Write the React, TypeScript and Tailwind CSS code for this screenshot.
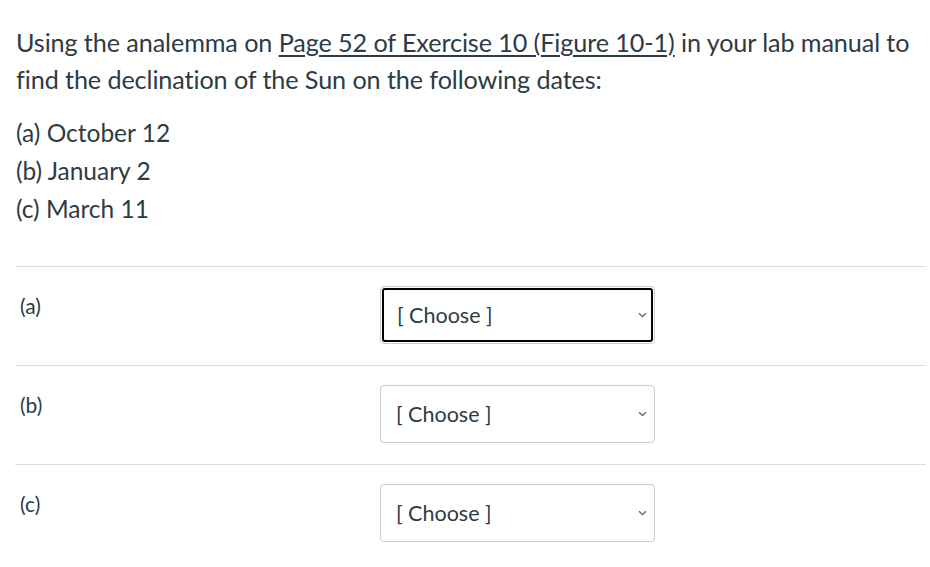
import React from 'react';

const rows = [
  { label: '(a)', focused: true },
  { label: '(b)', focused: false },
  { label: '(c)', focused: false },
];

function Chevron() {
  return (
    <svg width="9" height="6" viewBox="0 0 9 6" className="absolute right-[7px] top-1/2 -translate-y-1/2">
      <path d="M1 1.2 L4.5 4.6 L8 1.2" fill="none" stroke="#6b6b6b" strokeWidth="1.4" />
    </svg>
  );
}

export default function App() {
  return (
    <div className="bg-white w-[930px] h-[567px] overflow-hidden text-[#2d3b45]" style={{ fontFamily: 'Lato, "Open Sans", sans-serif' }}>
      <div className="pl-[16px] pt-[24px]">
        <p className="text-[25.2px] leading-[37px] tracking-[-0.1px]">
          Using the analemma on{' '}
          <span className="underline underline-offset-[3px]">Page 52 of Exercise 10 (Figure 10-1)</span> in your lab manual to
          find the declination of the Sun on the following dates:
        </p>
        <div className="mt-[16px] text-[24.5px] leading-[38px]">
          <div>(a) October 12</div>
          <div>(b) January 2</div>
          <div>(c) March 11</div>
        </div>
      </div>

      <div className="ml-[15px] mr-[4px] mt-[38px]">
        {rows.map((r) => (
          <div key={r.label} className="border-t border-[#dcdcdc] h-[99px] flex">
            <div className="w-[365px] pt-[23px] pl-[5px] text-[21px]">{r.label}</div>
            <div className="pt-[19px]">
              <div
                className={
                  r.focused
                    ? 'relative w-[275px] h-[58px] rounded-[4px] border border-[#c7cdd1] p-[1px]'
                    : 'relative w-[275px] h-[58px] rounded-[4px] border border-[#c7cdd1]'
                }
              >
                {r.focused && (
                  <div className="absolute inset-[1px] rounded-[3px] border-2 border-black" />
                )}
                <div className="h-full flex items-center pl-[15px] text-[21.5px]">[ Choose ]</div>
                <Chevron />
              </div>
            </div>
          </div>
        ))}
      </div>
    </div>
  );
}
